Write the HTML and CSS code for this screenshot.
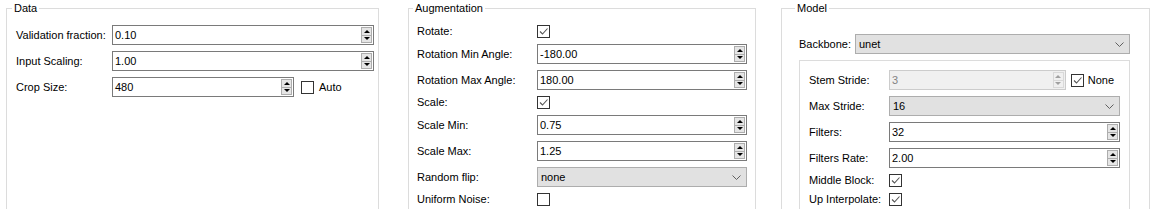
FILE: index.html
```html
<!DOCTYPE html>
<html lang="en">
<head>
    <meta charset="UTF-8">
    <title>Training Settings</title>
    <link rel="stylesheet" href="styles.css">
</head>
<body>

<div class="panels">

    <fieldset class="group group-data">
        <legend>Data</legend>
        <div class="form form-data">
            <span class="label">Validation fraction:</span>
            <div class="spin"><span class="value">0.10</span><span class="btns"><span class="up"></span><span class="down"></span></span></div>

            <span class="label">Input Scaling:</span>
            <div class="spin"><span class="value">1.00</span><span class="btns"><span class="up"></span><span class="down"></span></span></div>

            <span class="label">Crop Size:</span>
            <div class="inline">
                <div class="spin crop-spin"><span class="value">480</span><span class="btns"><span class="up"></span><span class="down"></span></span></div>
                <span class="check crop-check"></span>
                <span class="check-text">Auto</span>
            </div>
        </div>
    </fieldset>

    <fieldset class="group group-aug">
        <legend>Augmentation</legend>
        <div class="form form-aug">
            <span class="label">Rotate:</span>
            <span class="check checked"><svg width="11" height="11" viewBox="0 0 11 11"><polyline points="2,5.5 4.5,8 9.5,2.5" /></svg></span>

            <span class="label">Rotation Min Angle:</span>
            <div class="spin"><span class="value">-180.00</span><span class="btns"><span class="up"></span><span class="down"></span></span></div>

            <span class="label">Rotation Max Angle:</span>
            <div class="spin"><span class="value">180.00</span><span class="btns"><span class="up"></span><span class="down"></span></span></div>

            <span class="label">Scale:</span>
            <span class="check checked"><svg width="11" height="11" viewBox="0 0 11 11"><polyline points="2,5.5 4.5,8 9.5,2.5" /></svg></span>

            <span class="label">Scale Min:</span>
            <div class="spin"><span class="value">0.75</span><span class="btns"><span class="up"></span><span class="down"></span></span></div>

            <span class="label">Scale Max:</span>
            <div class="spin"><span class="value">1.25</span><span class="btns"><span class="up"></span><span class="down"></span></span></div>

            <span class="label">Random flip:</span>
            <div class="combo"><span>none</span><svg class="chev" width="9" height="5" viewBox="0 0 9 5"><polyline points="0.5,0.5 4.5,4.5 8.5,0.5" /></svg></div>

            <span class="label">Uniform Noise:</span>
            <span class="check"></span>
        </div>
    </fieldset>

    <fieldset class="group group-model">
        <legend>Model</legend>
        <div class="backbone-row">
            <span class="label">Backbone:</span>
            <div class="combo"><span>unet</span><svg class="chev" width="9" height="5" viewBox="0 0 9 5"><polyline points="0.5,0.5 4.5,4.5 8.5,0.5" /></svg></div>
        </div>

        <div class="inner-frame">
            <div class="form form-model">
                <span class="label">Stem Stride:</span>
                <div class="inline">
                    <div class="spin disabled"><span class="value">3</span><span class="btns"><span class="up"></span><span class="down"></span></span></div>
                    <span class="check checked stem-check"><svg width="11" height="11" viewBox="0 0 11 11"><polyline points="2,5.5 4.5,8 9.5,2.5" /></svg></span>
                    <span class="check-text stem-text">None</span>
                </div>

                <span class="label">Max Stride:</span>
                <div class="combo"><span>16</span><svg class="chev" width="9" height="5" viewBox="0 0 9 5"><polyline points="0.5,0.5 4.5,4.5 8.5,0.5" /></svg></div>

                <span class="label">Filters:</span>
                <div class="spin"><span class="value">32</span><span class="btns"><span class="up"></span><span class="down"></span></span></div>

                <span class="label">Filters Rate:</span>
                <div class="spin"><span class="value">2.00</span><span class="btns"><span class="up"></span><span class="down"></span></span></div>

                <span class="label">Middle Block:</span>
                <span class="check checked"><svg width="11" height="11" viewBox="0 0 11 11"><polyline points="2,5.5 4.5,8 9.5,2.5" /></svg></span>

                <span class="label">Up Interpolate:</span>
                <span class="check checked"><svg width="11" height="11" viewBox="0 0 11 11"><polyline points="2,5.5 4.5,8 9.5,2.5" /></svg></span>
            </div>
        </div>
    </fieldset>

</div>

</body>
</html>
```

FILE: styles.css
```css
body {
    margin: 0;
    background-color: #ffffff;
    font-family: 'Liberation Sans', Arial, sans-serif;
    font-size: 11px;
    color: #000000;
    overflow: hidden;
}

.panels {
    display: flex;
    align-items: flex-start;
    padding: 1px 0 0 6px;
}

/* group boxes - bottom edge sits just below the visible area */
.group {
    box-sizing: border-box;
    height: 209px;
    margin: 0;
    border: 1px solid #dcdcdc;
}

.group legend {
    padding: 0 2px;
    margin-left: -4px;
    line-height: 14px;
}

.group-data {
    width: 373px;
    padding: 10px 4px 0 9px;
}

.group-aug {
    width: 348px;
    margin-left: 29px;
    padding: 10px 8px 0 8px;
}

.group-model {
    width: 369px;
    margin-left: 25px;
    padding: 19px 19px 0 17px;
}

/* form rows */
.form {
    display: grid;
    row-gap: 6px;
    align-items: center;
}

.form-data {
    grid-template-columns: 96px 1fr;
}

.form-aug {
    grid-template-columns: 120px 1fr;
}

.form-model {
    grid-template-columns: 80px 1fr;
}

.label {
    line-height: 13px;
    white-space: nowrap;
}

.inline {
    display: flex;
    align-items: center;
}

/* spin boxes */
.spin {
    box-sizing: border-box;
    height: 20px;
    display: flex;
    border: 1px solid #7a7a7a;
    background-color: #ffffff;
}

.spin .value {
    flex: 1;
    padding-left: 2px;
    line-height: 18px;
}

.spin .btns {
    width: 11px;
    margin: 1px 1px 1px 0;
    box-sizing: border-box;
    display: flex;
    flex-direction: column;
    border: 1px solid #adadad;
    background-color: #e5e5e5;
}

.spin .btns span {
    flex: 1;
    display: flex;
    align-items: center;
    justify-content: center;
}

.spin .btns .up {
    border-bottom: 1px solid #adadad;
}

.spin .btns .up::before {
    content: "";
    border-left: 3px solid transparent;
    border-right: 3px solid transparent;
    border-bottom: 3px solid #000000;
}

.spin .btns .down::before {
    content: "";
    border-left: 3px solid transparent;
    border-right: 3px solid transparent;
    border-top: 3px solid #000000;
}

.spin.disabled {
    border-color: #cccccc;
    background-color: #f0f0f0;
    color: #838383;
}

.spin.disabled .btns {
    border-color: #d9d9d9;
    background-color: #f0f0f0;
}

.spin.disabled .btns .up {
    border-bottom-color: #d9d9d9;
}

.spin.disabled .btns .up::before {
    border-bottom-color: #a0a0a0;
}

.spin.disabled .btns .down::before {
    border-top-color: #a0a0a0;
}

.crop-spin {
    width: 182px;
}

.inline .spin.disabled {
    flex: 1;
}

/* combo boxes */
.combo {
    box-sizing: border-box;
    height: 20px;
    display: flex;
    align-items: center;
    justify-content: space-between;
    padding: 0 5px 0 3px;
    border: 1px solid #adadad;
    background-color: #e1e1e1;
}

.chev polyline {
    fill: none;
    stroke: #606060;
    stroke-width: 1;
}

/* check boxes */
.check {
    box-sizing: border-box;
    width: 13px;
    height: 13px;
    display: flex;
    border: 1px solid #333333;
    background-color: #ffffff;
}

.check polyline {
    fill: none;
    stroke: #555555;
    stroke-width: 1.1;
}

.crop-check {
    margin-left: 7px;
}

.stem-check {
    margin-left: 5px;
}

.check-text {
    margin-left: 5px;
    line-height: 13px;
}

.stem-text {
    margin-left: 4px;
    margin-right: 6px;
}

/* model group */
.backbone-row {
    display: grid;
    grid-template-columns: 56px 1fr;
    align-items: center;
}

.inner-frame {
    margin-top: 6px;
    height: 160px;
    padding: 9px 9px 0 9px;
    border: 1px solid #dcdcdc;
}
```
